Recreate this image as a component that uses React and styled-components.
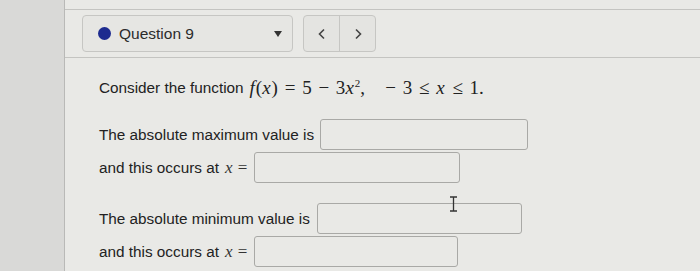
import React from "react";
import styled, { createGlobalStyle } from "styled-components";

const Global = createGlobalStyle`
  html, body { margin: 0; padding: 0; }
  body {
    background: #e7e7e4;
    font-family: "Liberation Sans", Arial, sans-serif;
    color: #222;
    overflow: hidden;
  }
`;

const Page = styled.div`
  display: flex;
  width: 700px;
  height: 271px;
`;

const Side = styled.div`
  width: 64px;
  background: #d9d9d7;
  border-right: 1px solid #b9b9b7;
  flex-shrink: 0;
`;

const Panel = styled.div`
  flex: 1;
  padding-top: 9px;
  background: #e9e9e6;
`;

const Header = styled.div`
  display: flex;
  align-items: center;
  gap: 10px;
  height: 49px;
  padding-left: 17px;
  border-top: 1px solid #c4c4c1;
  border-bottom: 1px solid #c4c4c1;
  box-sizing: border-box;
`;

const Select = styled.div`
  display: flex;
  align-items: center;
  width: 211px;
  height: 37px;
  box-sizing: border-box;
  border: 1px solid #c6c6c3;
  border-radius: 4px;
  background: #e6e6e3;
  padding: 0 10px 0 15px;
`;

const Dot = styled.span`
  width: 13px;
  height: 13px;
  border-radius: 50%;
  background: #1d2b8f;
  margin-right: 8px;
`;

const SelectLabel = styled.span`
  flex: 1;
  font-size: 15.5px;
  color: #2b2b2b;
`;

const Caret = styled.span`
  width: 0;
  height: 0;
  border-left: 4px solid transparent;
  border-right: 4px solid transparent;
  border-top: 6px solid #333;
`;

const Nav = styled.div`
  display: flex;
  height: 37px;
  border: 1px solid #c6c6c3;
  border-radius: 4px;
  box-sizing: border-box;
  background: #e4e4e1;
`;

const NavButton = styled.div`
  width: 35px;
  display: flex;
  align-items: center;
  justify-content: center;
  border-left: ${({ $first }) => ($first ? "none" : "1px solid #c6c6c3")};
`;

const Body = styled.div`
  padding: 14px 0 0 34px;
`;

const Prompt = styled.div`
  font-size: 15.3px;
  height: 32px;
  display: flex;
  align-items: center;
`;

const Math = styled.span`
  font-family: "Liberation Serif", "DejaVu Serif", serif;
  font-size: 19px;
  margin-left: 6px;
  word-spacing: 2px;
  color: #222;
`;

const I = styled.i`
  font-style: italic;
  margin-right: 1px;
`;

const Group = styled.div`
  margin-top: ${({ $top }) => $top}px;
  display: flex;
  flex-direction: column;
  gap: 2px;
`;

const Row = styled.div`
  display: flex;
  align-items: center;
  height: 31px;
  font-size: 15.3px;
`;

const Field = styled.div`
  width: ${({ $w }) => $w}px;
  height: 31px;
  margin-left: ${({ $ml }) => $ml}px;
  box-sizing: border-box;
  border: 1px solid #a9a9a6;
  border-radius: 3px;
  background: #e9e9e6;
  position: relative;
`;

const Cursor = styled.svg`
  position: absolute;
  left: 131px;
  top: -8px;
`;

const Eq = styled.span`
  font-family: "Liberation Serif", serif;
  font-size: 17px;
  margin: 0 7px 0 6px;
  color: #333;
`;

const Chevron = ({ dir }) => (
  <svg width="10" height="12" viewBox="0 0 10 12">
    <path
      d={dir === "l" ? "M7 1.5 L2.5 6 L7 10.5" : "M3 1.5 L7.5 6 L3 10.5"}
      fill="none"
      stroke="#444"
      strokeWidth="1.6"
    />
  </svg>
);

export default function App() {
  return (
    <>
      <Global />
      <Page>
        <Side />
        <Panel>
          <Header>
            <Select>
              <Dot />
              <SelectLabel>Question 9</SelectLabel>
              <Caret />
            </Select>
            <Nav>
              <NavButton $first>
                <Chevron dir="l" />
              </NavButton>
              <NavButton>
                <Chevron dir="r" />
              </NavButton>
            </Nav>
          </Header>
          <Body>
            <Prompt>
              Consider the function
              <Math>
                <I>f</I>(<I>x</I>) = 5 − 3<I>x</I>
                <sup style={{ fontSize: 11 }}>2</sup>,&nbsp;&nbsp; − 3 ≤ <I>x</I> ≤ 1.
              </Math>
            </Prompt>
            <Group $top={15}>
              <Row>
                The absolute maximum value is
                <Field $w={208} $ml={6} />
              </Row>
              <Row>
                and this occurs at
                <Eq>
                  <I>x</I> =
                </Eq>
                <Field $w={206} $ml={0} />
              </Row>
            </Group>
            <Group $top={20}>
              <Row>
                The absolute minimum value is
                <Field $w={205} $ml={7}>
                  <Cursor width="9" height="16" viewBox="0 0 9 16">
                    <path d="M1 1 H8 M4.5 1 V15 M1 15 H8" stroke="#333" strokeWidth="1.3" fill="none" />
                  </Cursor>
                </Field>
              </Row>
              <Row>
                and this occurs at
                <Eq>
                  <I>x</I> =
                </Eq>
                <Field $w={204} $ml={0} />
              </Row>
            </Group>
          </Body>
        </Panel>
      </Page>
    </>
  );
}
